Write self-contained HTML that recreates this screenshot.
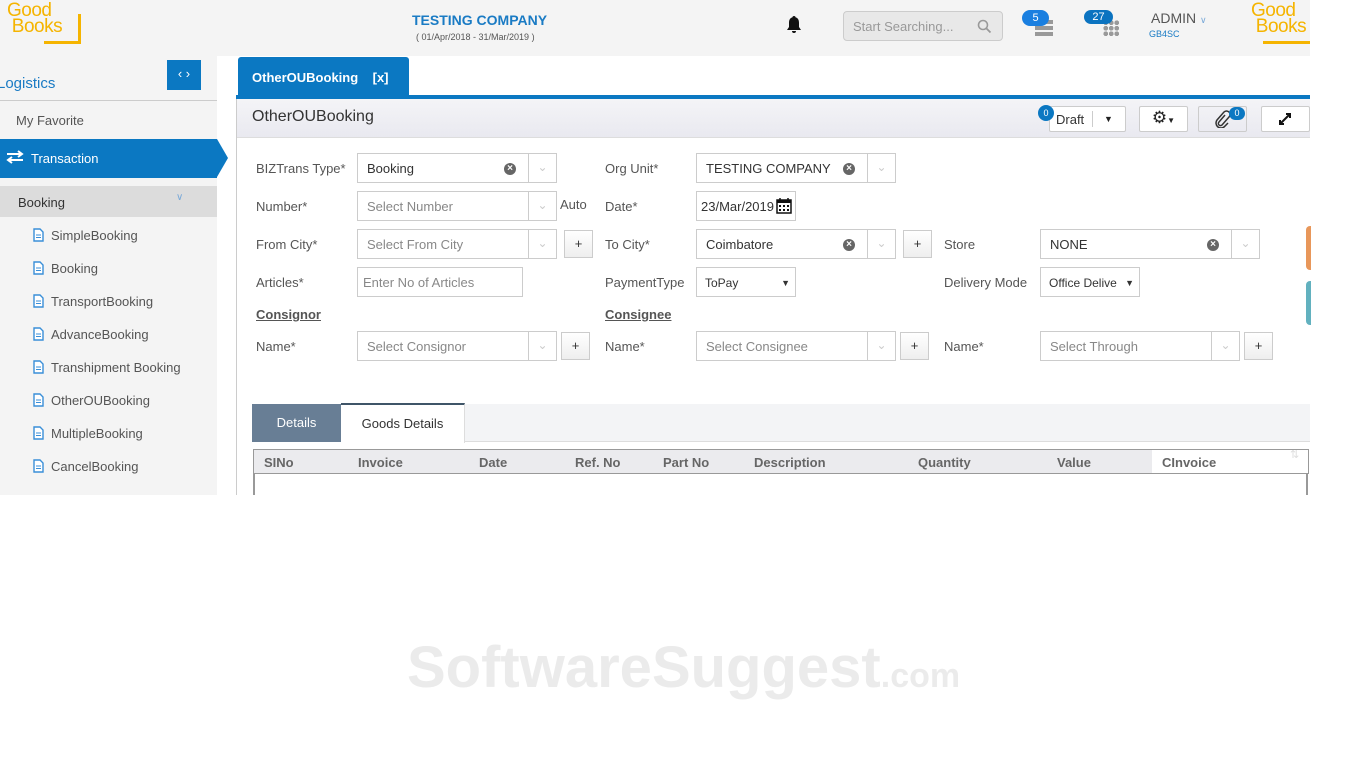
<!DOCTYPE html>
<html><head><meta charset="utf-8"><style>
*{box-sizing:border-box;margin:0;padding:0}
body{width:1366px;height:768px;position:relative;background:#fff;font-family:"Liberation Sans",sans-serif;font-size:13px;color:#555;overflow:hidden}
.a{position:absolute}
.hdr{left:0;top:0;width:1310px;height:56px;background:#f4f4f4}
.logo{color:#f5b400;font-size:19px;line-height:16px;letter-spacing:-0.5px}
.side{left:0;top:56px;width:217px;height:439px;background:#f4f4f4}
.item{left:33px;font-size:13px;color:#555}
.doc{display:inline-block;margin-right:7px;vertical-align:-2px}
.lbl{font-size:13px;color:#555}
.box{border:1px solid #ccc;background:#fff;height:30px;font-size:13px;line-height:30px;padding-left:9px;color:#333}
.ph{color:#888}
.dd{position:absolute;right:0;top:0;width:28px;height:28px;border-left:1px solid #ccc;text-align:center;color:#ccc;font-size:12px;line-height:26px}
.x{position:absolute;width:12px;height:12px;border-radius:50%;background:#666;color:#fff;font-size:10px;line-height:12px;text-align:center;top:9px;font-weight:bold}
.plus{border:1px solid #ccc;background:linear-gradient(#fff,#eee);width:29px;height:28px;text-align:center;line-height:26px;color:#333;font-size:13px}
.th{top:455px;font-weight:bold;color:#666;font-size:13px}
.btn{border:1px solid #ccc;background:#fff;height:26px;top:106px;border-radius:2px}
</style></head><body>
<div class="a hdr"></div>
<div class="a logo" style="left:7px;top:3px">Good<br>&nbsp;Books</div>
<div class="a" style="left:78px;top:14px;width:3px;height:30px;background:#f5b400"></div>
<div class="a" style="left:44px;top:41px;width:37px;height:3px;background:#f5b400"></div>
<div class="a" style="left:412px;top:12px;color:#1a7bc4;font-weight:bold;font-size:14px">TESTING COMPANY</div>
<div class="a" style="left:416px;top:32px;color:#555;font-size:9px">( 01/Apr/2018 - 31/Mar/2019 )</div>
<svg class="a" style="left:786px;top:15px" width="16" height="19" viewBox="0 0 16 19"><path d="M8 1c-1 0-1.5.6-1.5 1.3C4 3 3 5 3 8v4l-2 3h14l-2-3V8c0-3-1-5-3.5-5.7C9.5 1.6 9 1 8 1zM6 16a2 2 0 004 0z" fill="#111"/></svg>
<div class="a" style="left:843px;top:11px;width:160px;height:30px;border:1px solid #ccc;border-radius:4px;background:#e8e8e8;color:#999;padding:7px 9px;font-size:13px">Start Searching...</div>
<svg class="a" style="left:977px;top:19px" width="15" height="15" viewBox="0 0 15 15"><circle cx="6" cy="6" r="4.5" fill="none" stroke="#999" stroke-width="1.6"/><path d="M9.5 9.5l4 4" stroke="#999" stroke-width="1.8"/></svg>
<div class="a" style="left:1035px;top:20px;width:18px;height:16px;background:repeating-linear-gradient(#999 0 4px,transparent 4px 6px)"></div>
<div class="a" style="left:1022px;top:10px;width:27px;height:16px;border-radius:8px;background:#1a7fe0;color:#fff;font-size:11px;text-align:center;line-height:16px">5</div>
<div class="a" style="left:1103px;top:20px;width:16px;height:16px;background:radial-gradient(#999 60%,transparent 62%) 0 0/5.5px 5.5px"></div>
<div class="a" style="left:1084px;top:10px;width:29px;height:14px;border-radius:7px;background:#0b73c0;color:#fff;font-size:11px;text-align:center;line-height:14px">27</div>
<div class="a" style="left:1151px;top:10px;color:#555;font-size:14px">ADMIN <span style="color:#7aa9d8;font-size:9px">&#8744;</span></div>
<div class="a" style="left:1149px;top:29px;color:#1a7bc4;font-size:9px">GB4SC</div>
<div class="a logo" style="left:1251px;top:3px">Good<br>&nbsp;Books</div>
<div class="a" style="left:1263px;top:41px;width:47px;height:3px;background:#f5b400"></div>

<div class="a side"></div>
<div class="a" style="left:-3px;top:75px;color:#1a7bc4;font-size:15px">Logistics</div>
<div class="a" style="left:167px;top:60px;width:34px;height:30px;background:#0b78c2;color:#fff;text-align:center;line-height:28px;font-size:13px">&lsaquo; &rsaquo;</div>
<div class="a" style="left:0;top:100px;width:217px;height:1px;background:#ccc"></div>
<div class="a" style="left:16px;top:113px;font-size:13px;color:#555">My Favorite</div>
<div class="a" style="left:0;top:139px;width:217px;height:39px;background:#0b78c2"></div>
<div class="a" style="left:217px;top:139px;width:0;height:0;border-top:19.5px solid transparent;border-bottom:19.5px solid transparent;border-left:11px solid #0b78c2"></div>
<svg class="a" style="left:6px;top:150px" width="18" height="14" viewBox="0 0 18 14"><path d="M1 4h15M12 1l4 3-4 3M17 10H2M6 7l-4 3 4 3" fill="none" stroke="#fff" stroke-width="2"/></svg>
<div class="a" style="left:31px;top:151px;color:#fff;font-size:13px">Transaction</div>
<div class="a" style="left:0;top:186px;width:217px;height:31px;background:#dcdcdc"></div>
<div class="a" style="left:18px;top:195px;color:#333">Booking</div>
<div class="a" style="left:176px;top:192px;color:#7aa9d8;font-size:10px">&#8744;</div>
<div class="a item" style="top:228px"><svg class="doc" width="11" height="14" viewBox="0 0 11 14"><path d="M1 1h6l3 3v9H1z" fill="#fff" stroke="#3a8fd8" stroke-width="1.4"/><path d="M3 7h5M3 9.5h5" stroke="#3a8fd8"/></svg>SimpleBooking</div>
<div class="a item" style="top:261px"><svg class="doc" width="11" height="14" viewBox="0 0 11 14"><path d="M1 1h6l3 3v9H1z" fill="#fff" stroke="#3a8fd8" stroke-width="1.4"/><path d="M3 7h5M3 9.5h5" stroke="#3a8fd8"/></svg>Booking</div>
<div class="a item" style="top:294px"><svg class="doc" width="11" height="14" viewBox="0 0 11 14"><path d="M1 1h6l3 3v9H1z" fill="#fff" stroke="#3a8fd8" stroke-width="1.4"/><path d="M3 7h5M3 9.5h5" stroke="#3a8fd8"/></svg>TransportBooking</div>
<div class="a item" style="top:327px"><svg class="doc" width="11" height="14" viewBox="0 0 11 14"><path d="M1 1h6l3 3v9H1z" fill="#fff" stroke="#3a8fd8" stroke-width="1.4"/><path d="M3 7h5M3 9.5h5" stroke="#3a8fd8"/></svg>AdvanceBooking</div>
<div class="a item" style="top:360px"><svg class="doc" width="11" height="14" viewBox="0 0 11 14"><path d="M1 1h6l3 3v9H1z" fill="#fff" stroke="#3a8fd8" stroke-width="1.4"/><path d="M3 7h5M3 9.5h5" stroke="#3a8fd8"/></svg>Transhipment Booking</div>
<div class="a item" style="top:393px"><svg class="doc" width="11" height="14" viewBox="0 0 11 14"><path d="M1 1h6l3 3v9H1z" fill="#fff" stroke="#3a8fd8" stroke-width="1.4"/><path d="M3 7h5M3 9.5h5" stroke="#3a8fd8"/></svg>OtherOUBooking</div>
<div class="a item" style="top:426px"><svg class="doc" width="11" height="14" viewBox="0 0 11 14"><path d="M1 1h6l3 3v9H1z" fill="#fff" stroke="#3a8fd8" stroke-width="1.4"/><path d="M3 7h5M3 9.5h5" stroke="#3a8fd8"/></svg>MultipleBooking</div>
<div class="a item" style="top:459px"><svg class="doc" width="11" height="14" viewBox="0 0 11 14"><path d="M1 1h6l3 3v9H1z" fill="#fff" stroke="#3a8fd8" stroke-width="1.4"/><path d="M3 7h5M3 9.5h5" stroke="#3a8fd8"/></svg>CancelBooking</div>

<div class="a" style="left:236px;top:95px;width:1px;height:400px;background:#ccc"></div>
<div class="a" style="left:238px;top:57px;width:171px;height:39px;background:#0b78c2;border-radius:3px 3px 0 0;color:#fff;font-weight:bold;font-size:13px;padding:13px 0 0 14px">OtherOUBooking &nbsp;&nbsp;&nbsp;[x]</div>
<div class="a" style="left:236px;top:95px;width:1074px;height:4px;background:#0b78c2"></div>
<div class="a" style="left:237px;top:99px;width:1073px;height:39px;background:linear-gradient(#f4f4f7,#e9e9f0);border-bottom:1px solid #ddd"></div>
<div class="a" style="left:252px;top:108px;color:#333;font-size:16px">OtherOUBooking</div>
<div class="a btn" style="left:1049px;width:77px"><span class="a" style="left:6px;top:5px;color:#333">Draft</span><span class="a" style="left:42px;top:4px;width:1px;height:16px;background:#ccc"></span><span class="a" style="left:54px;top:7px;font-size:9px;color:#222">&#9660;</span></div>
<div class="a" style="left:1038px;top:105px;width:16px;height:16px;border-radius:50%;background:#0b78c2;color:#fff;font-size:9px;text-align:center;line-height:16px">0</div>
<div class="a btn" style="left:1139px;width:49px;text-align:center;font-size:17px;color:#222;line-height:22px">&#9881;<span style="font-size:8px">&#9660;</span></div>
<svg class="a" style="left:1214px;top:110px" width="16" height="18" viewBox="0 0 16 18"><path d="M11 5L5 12a2 2 0 003 3l7-8a3.5 3.5 0 00-5-5L3 10a5 5 0 007 7l4-4" fill="none" stroke="#333" stroke-width="1.5"/></svg>
<div class="a btn" style="left:1198px;width:49px;background:transparent"></div>
<div class="a" style="left:1229px;top:107px;width:16px;height:13px;border-radius:7px;background:#0b78c2;color:#fff;font-size:9px;text-align:center;line-height:13px">0</div>
<div class="a btn" style="left:1261px;width:49px"></div>
<svg class="a" style="left:1278px;top:112px" width="14" height="14" viewBox="0 0 14 14"><path d="M2 12L12 2M8 2h4v4M2 8v4h4" fill="none" stroke="#111" stroke-width="2"/></svg>

<div class="a lbl" style="left:256px;top:161px">BIZTrans Type*</div>
<div class="a box" style="left:357px;top:153px;width:200px">Booking<span class="x" style="left:146px">&times;</span><span class="dd">&#8964;</span></div>
<div class="a lbl" style="left:256px;top:199px">Number*</div>
<div class="a box" style="left:357px;top:191px;width:200px"><span class="ph">Select Number</span><span class="dd">&#8964;</span></div>
<div class="a lbl" style="left:560px;top:197px">Auto</div>
<div class="a lbl" style="left:256px;top:237px">From City*</div>
<div class="a box" style="left:357px;top:229px;width:200px"><span class="ph">Select From City</span><span class="dd">&#8964;</span></div>
<div class="a plus" style="left:564px;top:230px">+</div>
<div class="a lbl" style="left:256px;top:275px">Articles*</div>
<div class="a box" style="left:357px;top:267px;width:166px;padding-left:5px"><span class="ph">Enter No of Articles</span></div>
<div class="a lbl" style="left:256px;top:307px;font-weight:bold;text-decoration:underline;color:#555">Consignor</div>
<div class="a lbl" style="left:256px;top:339px">Name*</div>
<div class="a box" style="left:357px;top:331px;width:200px"><span class="ph">Select Consignor</span><span class="dd">&#8964;</span></div>
<div class="a plus" style="left:561px;top:332px">+</div>

<div class="a lbl" style="left:605px;top:161px">Org Unit*</div>
<div class="a box" style="left:696px;top:153px;width:200px">TESTING COMPANY<span class="x" style="left:146px">&times;</span><span class="dd">&#8964;</span></div>
<div class="a lbl" style="left:605px;top:199px">Date*</div>
<div class="a box" style="left:696px;top:191px;width:100px;padding-left:4px">23/Mar/2019</div>
<svg class="a" style="left:776px;top:197px" width="16" height="17" viewBox="0 0 16 17"><rect x="1" y="3" width="14" height="13" fill="#fff" stroke="#111" stroke-width="1.5"/><rect x="1" y="3" width="14" height="3" fill="#111"/><path d="M4 1v3M12 1v3" stroke="#111" stroke-width="1.5"/><g fill="#111"><rect x="3" y="8" width="2" height="2"/><rect x="7" y="8" width="2" height="2"/><rect x="11" y="8" width="2" height="2"/><rect x="3" y="12" width="2" height="2"/><rect x="7" y="12" width="2" height="2"/><rect x="11" y="12" width="2" height="2"/></g></svg>
<div class="a lbl" style="left:605px;top:237px">To City*</div>
<div class="a box" style="left:696px;top:229px;width:200px">Coimbatore<span class="x" style="left:146px">&times;</span><span class="dd">&#8964;</span></div>
<div class="a plus" style="left:903px;top:230px">+</div>
<div class="a lbl" style="left:605px;top:275px">PaymentType</div>
<div class="a box" style="left:696px;top:267px;width:100px;padding-left:8px;font-size:12px">ToPay<span class="a" style="right:5px;top:0;font-size:9px;color:#333">&#9660;</span></div>
<div class="a lbl" style="left:605px;top:307px;font-weight:bold;text-decoration:underline">Consignee</div>
<div class="a lbl" style="left:605px;top:339px">Name*</div>
<div class="a box" style="left:696px;top:331px;width:200px"><span class="ph">Select Consignee</span><span class="dd">&#8964;</span></div>
<div class="a plus" style="left:900px;top:332px">+</div>

<div class="a lbl" style="left:944px;top:237px">Store</div>
<div class="a box" style="left:1040px;top:229px;width:220px">NONE<span class="x" style="left:166px">&times;</span><span class="dd">&#8964;</span></div>
<div class="a lbl" style="left:944px;top:275px">Delivery Mode</div>
<div class="a box" style="left:1040px;top:267px;width:100px;padding-left:8px;font-size:12px;overflow:hidden;white-space:nowrap">Office Delive<span class="a" style="right:5px;top:0;font-size:9px;color:#333;background:#fff;padding-left:2px">&#9660;</span></div>
<div class="a lbl" style="left:944px;top:339px">Name*</div>
<div class="a box" style="left:1040px;top:331px;width:200px"><span class="ph">Select Through</span><span class="dd">&#8964;</span></div>
<div class="a plus" style="left:1244px;top:332px">+</div>

<div class="a" style="left:1306px;top:226px;width:5px;height:44px;background:#e8975a;border-radius:4px 0 0 4px"></div>
<div class="a" style="left:1306px;top:281px;width:5px;height:44px;background:#62b1bf;border-radius:4px 0 0 4px"></div>

<div class="a" style="left:252px;top:404px;width:1058px;height:38px;background:#f3f4f6;border-bottom:1px solid #ddd"></div>
<div class="a" style="left:252px;top:404px;width:89px;height:38px;background:#687e95;color:#fff;text-align:center;line-height:38px">Details</div>
<div class="a" style="left:341px;top:403px;width:124px;height:40px;background:#fff;border-top:2px solid #3f5568;border-right:1px solid #ddd;color:#333;text-align:center;line-height:38px;font-size:13px">Goods Details</div>
<div class="a" style="left:253px;top:449px;width:1056px;height:25px;background:#ebebee;border:1px solid #999"></div>
<div class="a" style="left:1152px;top:450px;width:156px;height:23px;background:#fff"></div>
<div class="a" style="left:253px;top:473px;width:2px;height:22px;background:#999"></div>
<div class="a" style="left:1306px;top:473px;width:2px;height:22px;background:#999"></div>
<div class="a th" style="left:264px">SINo</div>
<div class="a th" style="left:358px">Invoice</div>
<div class="a th" style="left:479px">Date</div>
<div class="a th" style="left:575px">Ref. No</div>
<div class="a th" style="left:663px">Part No</div>
<div class="a th" style="left:754px">Description</div>
<div class="a th" style="left:918px">Quantity</div>
<div class="a th" style="left:1057px">Value</div>
<div class="a th" style="left:1162px">CInvoice</div>
<div class="a" style="left:1290px;top:448px;color:#ddd;font-size:11px">&#8645;</div>

<div class="a" style="left:407px;top:634px;color:#ebebeb;font-weight:bold;font-size:58px;letter-spacing:0;white-space:nowrap">SoftwareSuggest<span style="font-size:34px">.com</span></div>
</body></html>
